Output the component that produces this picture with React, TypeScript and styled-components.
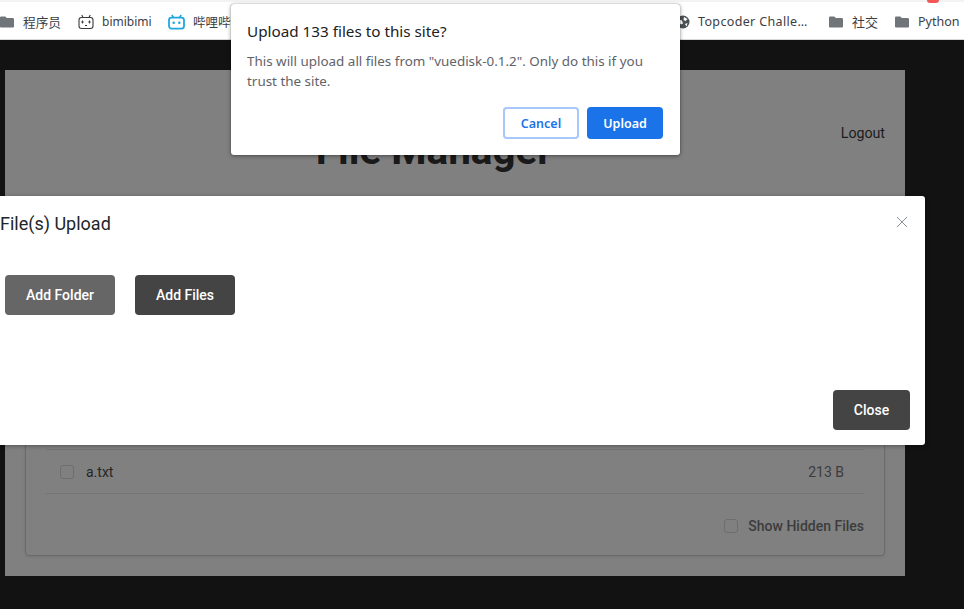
import React from "react";
import styled, { createGlobalStyle } from "styled-components";

const Global = createGlobalStyle`
  html, body { margin: 0; padding: 0; width: 964px; height: 609px; overflow: hidden; background: #121212; }
  * { box-sizing: border-box; }
`;

const Shell = styled.div`
  position: relative;
  width: 964px;
  height: 609px;
  background: #121212;
  overflow: hidden;
  font-family: Roboto, "Liberation Sans", sans-serif;
`;

const BookmarkBar = styled.div`
  height: 40px;
  padding-top: 2px;
  background: #ffffff;
  border-top: 2px solid #f1f3f4;
  border-bottom: 1px solid #d8d8d8;
  display: flex;
  align-items: center;
  font-family: "Noto Sans", "Noto Sans CJK SC", sans-serif;
  color: #3c4043;
  position: relative;
`;

const Mark = styled.div<{ $w: number; $gap?: number }>`
  display: flex;
  align-items: center;
  width: ${(p) => p.$w}px;
  gap: ${(p) => p.$gap ?? 9}px;
  white-space: nowrap;
  flex: none;
`;

const Label = styled.span<{ $size?: number; $spacing?: number }>`
  font-size: ${(p) => p.$size ?? 12.5}px;
  letter-spacing: ${(p) => p.$spacing ?? 0}px;
`;

const Spacer = styled.div<{ $w: number }>`
  width: ${(p) => p.$w}px;
  flex: none;
`;

const Badge = styled.span`
  position: absolute;
  top: -2px;
  left: 927px;
  width: 12px;
  height: 3px;
  border-radius: 0 0 3px 3px;
  background: #f25757;
`;

const Page = styled.main`
  width: 900px;
  height: 506px;
  margin: 30px 0 0 5px;
  background: #808080;
  padding: 57px 62px 0 20px;
  position: relative;
`;

const Logout = styled.span`
  position: absolute;
  top: 55px;
  right: 20px;
  font-size: 14.2px;
  color: #1c1c1c;
`;

const Title = styled.h1`
  margin: 0;
  text-align: center;
  font-size: 40.4px;
  line-height: 48px;
  font-weight: 700;
  color: #1a1a1a;
`;

const Card = styled.section`
  height: 342px;
  position: absolute;
  left: 20px;
  right: 20px;
  top: 144px;
  border: 1px solid #6a6a6a;
  border-radius: 4px;
  padding: 0 20px;
  display: flex;
  flex-direction: column;
  justify-content: flex-end;
  box-shadow: 0 1px 3px rgba(0, 0, 0, 0.1);
`;

const FileRow = styled.div`
  height: 45px;
  border-top: 1px solid #747474;
  border-bottom: 1px solid #747474;
  display: flex;
  align-items: center;
  justify-content: space-between;
  padding: 0 20px 0 14px;
  font-size: 14px;
  color: #262626;
`;

const FileName = styled.div`
  display: flex;
  align-items: center;
  gap: 12px;
`;

const Size = styled.span`
  color: #3c3c3c;
`;

const Check = styled.span`
  width: 14px;
  height: 14px;
  border: 1px solid #6e6e6e;
  border-radius: 3px;
  flex: none;
`;

const Footer = styled.div`
  height: 61px;
  display: flex;
  align-items: center;
  justify-content: flex-end;
  gap: 10px;
  padding-top: 2px;
  font-size: 14px;
  font-weight: 500;
  color: #3c3c3c;
`;

const Modal = styled.div`
  position: absolute;
  left: -10px;
  top: 196px;
  width: 935px;
  height: 249px;
  background: #fff;
  border-radius: 3px;
  box-shadow: 0 1px 4px rgba(0, 0, 0, 0.35);
  display: flex;
  flex-direction: column;
  padding: 0 15px 0 10px;
`;

const ModalHead = styled.div`
  height: 54px;
  display: flex;
  align-items: center;
  justify-content: space-between;
  font-size: 18px;
  color: #212529;
  padding-right: 2px;
`;

const CloseMark = styled.span`
  display: flex;
  margin-bottom: 2px;
`;

const ModalBody = styled.div`
  display: flex;
  gap: 20px;
  padding: 25px 0 0 5px;
  flex: 1;
`;

const ModalFoot = styled.div`
  display: flex;
  justify-content: flex-end;
  padding-bottom: 15px;
`;

const DarkButton = styled.button<{ $w: number; $light?: boolean }>`
  width: ${(p) => p.$w}px;
  height: 40px;
  border: 0;
  border-radius: 4px;
  background: ${(p) => (p.$light ? "#666666" : "#444444")};
  color: #fff;
  font-family: Roboto, sans-serif;
  font-weight: 500;
  font-size: 14px;
  padding: 0;
`;

const Dialog = styled.div`
  position: absolute;
  left: 231px;
  top: 4px;
  width: 449px;
  height: 151px;
  background: #fff;
  border-radius: 3px;
  box-shadow: 0 0 1px rgba(0, 0, 0, 0.5), 0 1px 4px rgba(0, 0, 0, 0.4);
  padding: 16px 17px 16px 16px;
  font-family: "Noto Sans", sans-serif;
  display: flex;
  flex-direction: column;
`;

const DialogTitle = styled.div`
  font-size: 15.25px;
  line-height: 22px;
  color: #202124;
`;

const DialogText = styled.div`
  margin-top: 9px;
  font-size: 13.42px;
  line-height: 20px;
  color: #5f6368;
`;

const DialogActions = styled.div`
  display: flex;
  justify-content: flex-end;
  gap: 8px;
  margin-top: auto;
`;

const ChromeButton = styled.button<{ $primary?: boolean }>`
  width: 76px;
  height: 32px;
  border-radius: 4px;
  font-family: "Noto Sans", sans-serif;
  font-size: 12.5px;
  font-weight: 600;
  padding: 0;
  background: ${(p) => (p.$primary ? "#1a73e8" : "#fff")};
  color: ${(p) => (p.$primary ? "#fff" : "#1a73e8")};
  border: ${(p) => (p.$primary ? "0" : "1px solid #dadce0")};
  outline: ${(p) => (p.$primary ? "none" : "2px solid #a8c7fa")};
  outline-offset: -2px;
`;

const FolderIcon = () => (
  <svg width="14" height="12" viewBox="0 0 14 12">
    <path d="M1.3 0.5h4l1.5 1.6h5.9c.7 0 1.3.6 1.3 1.3v7c0 .7-.6 1.2-1.3 1.2H1.3C.6 11.6 0 11.1 0 10.4V1.7C0 1 .6.5 1.3.5z" fill="#70757a" />
  </svg>
);

const BimiIcon = () => (
  <svg width="16" height="16" viewBox="0 0 16 16" fill="none" stroke="#3a3a3a" strokeWidth="1.1">
    <rect x="1" y="3.5" width="14" height="11" rx="2.5" />
    <path d="M5 3.5 3.8 1M11 3.5 12.2 1" />
    <path d="M4.5 6.5v3M3.2 8h2.6M11.5 6.5v3M10.2 8h2.6" strokeWidth="0.9" />
    <path d="M7 11.5h2" />
  </svg>
);

const BiliIcon = () => (
  <svg width="17" height="16" viewBox="0 0 17 16" fill="none">
    <rect x="1" y="3.6" width="15" height="11" rx="2.5" stroke="#20a8dd" strokeWidth="1.8" />
    <path d="M5.5 3.5 3.8 1M11.5 3.5 13.2 1" stroke="#20a8dd" strokeWidth="1.6" />
    <circle cx="5.7" cy="8.8" r="1.3" fill="#20a8dd" />
    <circle cx="11.3" cy="8.8" r="1.3" fill="#20a8dd" />
  </svg>
);

const TopcoderIcon = () => (
  <svg width="14" height="14" viewBox="0 0 14 14">
    <circle cx="7" cy="7" r="6.5" fill="#4d5156" />
    <path d="M3 4.5l3 1 1 3-2 1-2-2zM8 2l3.5 2-2 2-2-1zM9 9l2.5-1-1 3.5z" fill="#fff" />
  </svg>
);

const CloseIcon = () => (
  <svg width="12" height="12" viewBox="0 0 12 12" stroke="#8a9097" strokeWidth="1" fill="none">
    <path d="M1 1l10 10M11 1L1 11" />
  </svg>
);

export default function App() {
  return (
    <Shell>
      <Global />
      <BookmarkBar>
        <Mark $w={78}>
          <FolderIcon />
          <Label $size={12.7}>程序员</Label>
        </Mark>
        <Mark $w={90} $gap={8}>
          <BimiIcon />
          <Label $size={12}>bimibimi</Label>
        </Mark>
        <Mark $w={120} $gap={8}>
          <BiliIcon />
          <Label>哔哩哔哩</Label>
        </Mark>
        <Spacer $w={388} />
        <Mark $w={153} $gap={8}>
          <TopcoderIcon />
          <Label $spacing={0.35}>Topcoder Challe…</Label>
        </Mark>
        <Mark $w={66}>
          <FolderIcon />
          <Label $size={13}>社交</Label>
        </Mark>
        <Mark $w={65}>
          <FolderIcon />
          <Label>Python</Label>
        </Mark>
        <Badge />
      </BookmarkBar>
      <Page>
        <Logout>Logout</Logout>
        <Title>File Manager</Title>
        <Card>
          <FileRow>
            <FileName>
              <Check />
              <span>a.txt</span>
            </FileName>
            <Size>213 B</Size>
          </FileRow>
          <Footer>
            <Check />
            <span>Show Hidden Files</span>
          </Footer>
        </Card>
      </Page>
      <Modal>
        <ModalHead>
          <span>File(s) Upload</span>
          <CloseMark>
            <CloseIcon />
          </CloseMark>
        </ModalHead>
        <ModalBody>
          <DarkButton $w={110} $light>Add Folder</DarkButton>
          <DarkButton $w={100}>Add Files</DarkButton>
        </ModalBody>
        <ModalFoot>
          <DarkButton $w={77}>Close</DarkButton>
        </ModalFoot>
      </Modal>
      <Dialog>
        <DialogTitle>Upload 133 files to this site?</DialogTitle>
        <DialogText>
          This will upload all files from "vuedisk-0.1.2". Only do this if you trust the site.
        </DialogText>
        <DialogActions>
          <ChromeButton>Cancel</ChromeButton>
          <ChromeButton $primary>Upload</ChromeButton>
        </DialogActions>
      </Dialog>
    </Shell>
  );
}
